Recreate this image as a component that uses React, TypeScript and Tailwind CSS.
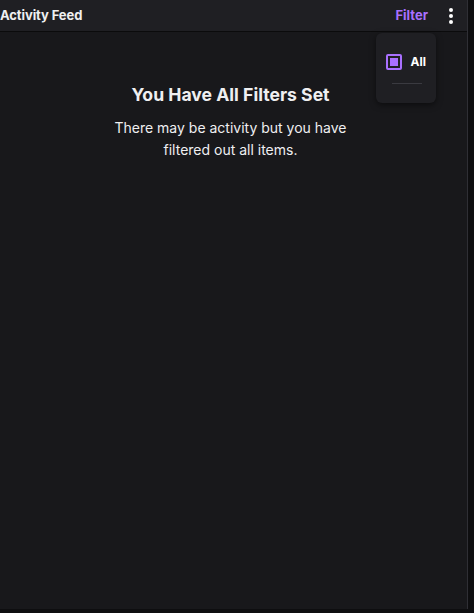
import { useState } from "react";

export default function App() {
  const [allChecked] = useState(true);

  return (
    <div className="flex h-[613px] w-[474px] bg-[#0e0e10]" style={{ fontFamily: "Inter, 'Noto Sans', sans-serif" }}>
      <div className="relative flex h-[609px] w-[468px] flex-col border-r border-[#2f2f35] bg-[#18181b] text-[#efeff1]">
        <header className="flex h-[32px] items-center justify-between border-b border-[#0b0b0c] bg-[#1f1f23] pr-[10px]">
          <h1 className="text-[13px] font-bold tracking-[-0.1px]">Activity Feed</h1>
          <div className="flex items-center gap-[17px]">
            <button className="text-[13px] font-bold text-[#a970ff]">Filter</button>
            <button className="flex flex-col items-center gap-[2px] px-1" aria-label="More">
              <span className="h-[4px] w-[4px] rounded-full bg-white" />
              <span className="h-[4px] w-[4px] rounded-full bg-white" />
              <span className="h-[4px] w-[4px] rounded-full bg-white" />
            </button>
          </div>
        </header>

        <main className="flex flex-col items-center pr-[6px] pt-[51px] text-center">
          <h2 className="text-[17.6px] font-bold leading-[24px]">You Have All Filters Set</h2>
          <p className="mt-[10px] w-[250px] text-[14px] leading-[22px] text-[#efeff1]">
            There may be activity but you have filtered out all items.
          </p>
        </main>

        <div className="absolute left-[376px] top-[33px] w-[60px] rounded-md bg-[#1f1f23] px-[10px] pb-[19px] pt-[20px] shadow-[0_2px_6px_rgba(0,0,0,0.5)]">
          <label className="flex items-center gap-[9px]">
            <span className="flex h-[16px] w-[16px] items-center justify-center rounded-[2px] border-2 border-[#a970ff]">
              {allChecked && <span className="h-[8px] w-[8px] bg-[#a970ff]" />}
            </span>
            <span className="text-[12px] font-bold text-white">All</span>
          </label>
          <div className="ml-[6px] mt-[12px] h-px w-[30px] bg-[#3a3a40]" />
        </div>
      </div>
    </div>
  );
}
